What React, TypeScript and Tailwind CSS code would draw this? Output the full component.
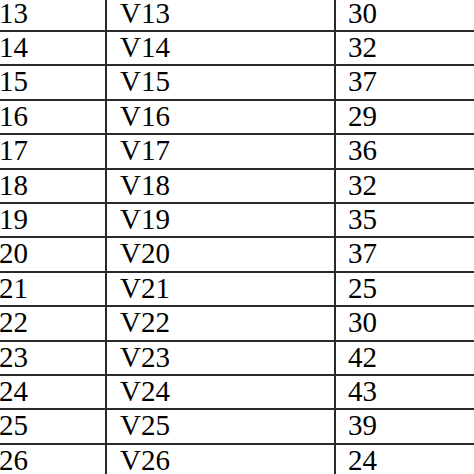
const rows: [number, number][] = [
  [13, 30],
  [14, 32],
  [15, 37],
  [16, 29],
  [17, 36],
  [18, 32],
  [19, 35],
  [20, 37],
  [21, 25],
  [22, 30],
  [23, 42],
  [24, 43],
  [25, 39],
  [26, 24],
];

export default function App() {
  return (
    <div className="w-[474px] h-[474px] overflow-hidden bg-white text-black">
      <div
        className="mt-[-2.4px] ml-[-14px] w-[520px] text-[29px] leading-[30px]"
        style={{ fontFamily: '"Liberation Serif", "Times New Roman", serif' }}
      >
        {rows.map(([n, v]) => (
          <div
            key={n}
            className="grid grid-cols-[121px_229px_1fr] h-[34.4px] border-b-2 border-[#2a2a2a]"
          >
            <div className="pl-[13px] border-r-2 border-[#2a2a2a]">{n}</div>
            <div className="pl-[13px] border-r-2 border-[#2a2a2a]">V{n}</div>
            <div className="pl-[12px]">{v}</div>
          </div>
        ))}
      </div>
    </div>
  );
}
